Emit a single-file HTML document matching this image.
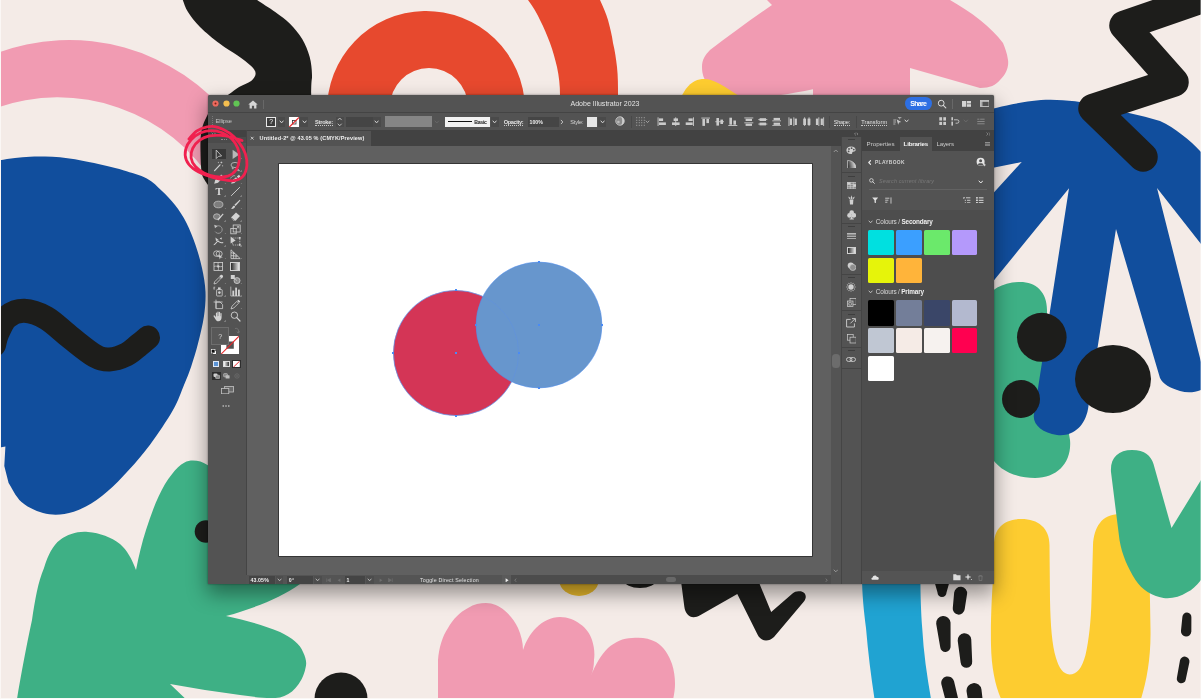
<!DOCTYPE html>
<html><head><meta charset="utf-8"><title>Adobe Illustrator 2023</title>
<style>
*{box-sizing:border-box;margin:0;padding:0}
html,body{width:1201px;height:699px;overflow:hidden;background:#f4ebe7;font-family:"Liberation Sans",sans-serif}
#bg{position:absolute;left:0;top:0;width:1201px;height:699px}
#shadow{position:absolute;left:208px;top:95px;width:785.7px;height:488.8px;border-radius:2px 2px 0 0;box-shadow:0 9px 20px 1px rgba(0,0,0,.4),0 0 2px rgba(0,0,0,.5)}
#win{position:absolute;left:208px;top:95px;width:785.7px;height:488.8px;background:#535353;border-radius:2px 2px 0 0;overflow:hidden}
#w{will-change:transform;position:absolute;left:-208px;top:-95px;width:1201px;height:699px}
.a{position:absolute;display:block}
.t{white-space:nowrap}
#over{position:absolute;left:0;top:0;width:1201px;height:699px;pointer-events:none}
</style></head><body>
<svg id="bg" width="1201" height="699" viewBox="0 0 1201 699">
<rect width="1201" height="699" fill="#f4ebe7"/>
<!-- blue blob left -->
<path d="M-8.0,162.0 C-6.7,161.7 -3.8,161.0 0.0,160.3 C3.8,159.6 10.0,158.6 15.0,158.0 C20.0,157.4 25.0,156.9 30.0,156.7 C35.0,156.5 40.0,156.5 45.0,156.6 C50.0,156.7 55.0,156.9 60.0,157.3 C65.0,157.8 70.0,158.5 75.0,159.3 C80.0,160.1 84.7,161.2 90.0,162.3 C95.3,163.4 101.3,164.6 107.0,166.0 C112.7,167.4 117.4,168.4 124.0,170.5 C130.6,172.6 140.5,175.1 146.8,178.5 C153.1,181.9 157.3,186.6 162.0,191.0 C166.7,195.4 170.9,199.7 175.0,205.0 C179.1,210.3 183.1,216.3 186.5,223.0 C189.9,229.7 192.9,237.5 195.5,245.0 C198.1,252.5 200.3,260.2 202.0,268.0 C203.7,275.8 205.2,284.0 205.5,292.0 C205.8,300.0 205.2,307.4 204.0,316.0 C202.8,324.6 200.1,335.2 198.0,343.6 C195.9,352.0 193.5,359.6 191.2,366.5 C188.9,373.4 187.0,377.8 184.0,385.0 C181.0,392.2 178.6,400.1 173.0,410.0 C167.4,419.9 157.6,434.4 150.2,444.4 C142.8,454.4 136.0,462.1 128.8,470.0 C121.7,477.9 114.5,485.5 107.3,491.6 C100.1,497.7 93.1,502.9 85.9,506.6 C78.8,510.3 71.6,512.9 64.4,514.0 C57.3,515.1 50.1,515.0 43.0,513.0 C35.9,511.0 27.2,507.0 21.5,502.0 C15.8,497.0 10.8,486.2 8.6,483.0 L4.3,466 L5.4,446.5 L-8,449 Z" fill="#114e9d"/>
<!-- black squiggle on blue -->
<path d="M-6.0,345.0 C-5.4,342.9 -4.6,337.3 -2.4,332.6 C-0.2,327.9 2.8,320.4 7.3,316.8 C11.8,313.2 17.8,310.6 24.3,310.8 C30.8,311.0 38.5,313.6 46.2,318.0 C53.9,322.4 62.4,331.2 70.5,337.5 C78.6,343.8 88.3,352.1 94.8,355.7 C101.3,359.3 104.1,359.6 109.4,359.4 C114.7,359.2 121.5,356.9 126.4,354.5 C131.3,352.1 135.4,347.8 139.0,345.0 C142.6,342.2 146.5,338.8 148.0,337.5" fill="none" stroke="#1d1d1b" stroke-width="24" stroke-linecap="round" stroke-linejoin="round"/>
<!-- pink arc -->
<path d="M-5,53.85 A205.8,205.8 0 0 1 232,119.9 L215,185.2 A184.4,184.4 0 0 0 -5,108.4 Z" fill="#f19bb2"/>
<!-- black blob top-left -->
<path d="M181.0,-6.0 C181.3,-5.0 181.6,-3.0 182.8,0.0 C184.0,3.0 185.1,7.5 188.0,12.0 C190.9,16.5 194.7,21.7 200.0,27.0 C205.3,32.3 213.3,38.8 219.6,43.6 C225.9,48.4 232.3,51.9 237.6,55.6 C242.8,59.4 248.1,63.1 251.1,66.1 C254.1,69.1 255.6,71.1 255.6,73.6 C255.6,76.1 253.8,78.8 251.1,81.1 C248.3,83.3 242.8,84.8 239.1,87.1 C235.3,89.3 232.8,91.8 228.6,94.6 C224.4,97.4 217.4,100.8 214.0,104.0 C210.6,107.2 209.8,110.5 208.0,114.0 C206.2,117.5 204.2,121.2 203.0,125.0 C201.8,128.8 201.1,132.5 200.7,137.0 C200.3,141.5 200.4,147.2 200.5,152.0 C200.6,156.8 200.7,162.0 201.0,166.0 C201.3,170.0 201.3,172.8 202.5,176.0 C203.7,179.2 207.1,183.5 208.0,185.0 L311,190 L311.0,190.0 C311.0,174.1 311.0,113.8 311.2,94.6 C311.4,75.4 312.2,81.3 312.0,75.0 C311.8,68.7 311.3,63.0 309.7,57.0 C308.1,51.0 305.4,44.5 302.2,39.0 C298.9,33.5 294.7,28.5 290.2,24.0 C285.7,19.5 280.7,16.0 275.2,12.0 C269.7,8.0 261.3,3.0 257.1,0.0 C252.9,-3.0 251.2,-5.0 250.0,-6.0 Z" fill="#1d1d1b"/>
<!-- orange ring -->
<path d="M327,112 A99,99 0 1 1 525,108 A99,99 0 1 1 327,108 Z M390,107 A39,39 0 1 0 468,107 A39,39 0 1 0 390,107 Z" fill="#e7492e" fill-rule="evenodd"/>
<path d="M528,0 C533,7 537,13 540,20 C544,28 547,35 550,43 C553,51 555,59 557,67 C559,76 560,86 560,95 L560,130 L618,130 L618,95 C618,86 618,76 617,67 C616,59 615,51 613,43 C612,35 610,28 608,20 C606,13 603,7 600,0 Z" fill="#e7492e"/>
<!-- pink flower top right -->
<path d="M767,0 L772,5 C750,20 730,35 710,50 C705,55 702,60 702,67 C702,74 704,79 707,83 C712,89 719,93 727,95 L777,95.5 C790,94 802,91.5 813,89.3 L813,130 L910,130 L910,68 L980,88 C990,88 996,85 1000,80 C1006,74 1009,67 1008,60 C1007,53 1005,48 1003,43 C997,35 989,27 980,20 C970,12 960,6 950,0 Z" fill="#f19bb2"/>
<!-- yellow blob top -->
<path d="M680,100 C683,92 688,84.5 695,81 C698,79.6 701,79 704,79 C709,79 714,80.8 719,83.5 C726,87.5 733,92 742,98 L742,110 L680,110 Z" fill="#fdcc30"/>
<!-- green bar right -->
<path d="M985,300 C990,290 1003,282 1020,282 C1036,282 1047,292 1047,310 L1047,330 C1055,370 1066,410 1070,440 C1072,462 1058,478 1035,478 C1015,478 998,470 990,455 Z" fill="#3eb085"/>
<!-- blue fan -->
<path d="M980,112 C995,108 1012,103 1041,100 C1060,99 1080,101 1100,106 C1120,111 1140,115 1160,121 C1175,128 1190,140 1201,152 L1201,244 L1157,188 L1201,362 L1210,385 C1200,392 1190,394 1180,391 C1170,388 1163,384 1160,378 L1116,229 L1088,409 C1085,426 1073,437 1057,435 C1042,433 1032,424 1034,414 L1069,188.3 L993.2,281.3 L980,297.5 L980,205 L993.2,193.3 L1021.7,162 L993.2,167.8 L980,170.5 Z" fill="#114e9d"/>
<!-- black dots right -->
<ellipse cx="1041.8" cy="337.3" rx="24.8" ry="24.5" fill="#1d1d1b"/>
<ellipse cx="1113" cy="379" rx="38" ry="34" fill="#1d1d1b"/>
<ellipse cx="1021" cy="399" rx="19" ry="19" fill="#1d1d1b"/>
<!-- black zigzag top right -->
<path d="M1215,-6 L1124,25.5 L1174,82 L1093,108.5 L1143,157" fill="none" stroke="#1d1d1b" stroke-width="29.5" stroke-linecap="round" stroke-linejoin="round"/>
<!-- yellow U -->
<path d="M994,545 C994,528 1004,519 1021.5,519 C1038,519 1049.5,528 1049.5,545 L1050,600 C1050.5,625 1052,645 1056,658 C1059,668 1063,674 1069.5,674.5 C1077,674.5 1082,668 1085.5,655 C1089,640 1091,620 1091.5,600 L1093,545 C1094,528 1101,514 1120,514 C1140,514 1149,528 1149,545 L1150.5,630 C1151,660 1146,685 1139,705 L1004,705 C996,690 991.5,670 991,645 C990.5,620 992,590 994,565 Z" fill="#fdcc30"/>
<!-- green V -->
<path d="M1111,472 C1110,458 1118,450 1132,450 C1145,450 1151,456 1153.5,464 L1171.5,528 L1201,480 L1215,480 L1215,565 L1201,580 C1196,586 1192,590 1187.5,592 C1180,597 1171,599 1163.5,598 C1152,596 1142,590 1135.5,580 C1128,568 1122,555 1119.5,540 Z" fill="#3eb085"/>
<!-- light blue arc -->
<path d="M862,575 C862,595 864,612 866,628 C868,652 871,676 874.5,699 L931,699 C927,676 923.5,652 922.2,628 C921,612 920.4,595 920.4,575 Z" fill="#20a3d2"/>
<!-- dashes -->
<g fill="#1d1d1b">
<path d="M-7.8,-4.2 A7.8,7.8 0 0 1 7.8,-4.2 L4.5,7.5 A4.5,4.5 0 0 1 -4.5,7.5 Z" transform="translate(942,585) rotate(0)"/>
<path d="M-6.5,-7.5 A6.5,6.5 0 0 1 6.5,-7.5 L6.0,8.0 A6.0,6.0 0 0 1 -6.0,8.0 Z" transform="translate(959.7,600.7) rotate(7)"/>
<path d="M-7.2,-10.8 A7.2,7.2 0 0 1 7.2,-10.8 L5.2,12.8 A5.2,5.2 0 0 1 -5.2,12.8 Z" transform="translate(944.3,634) rotate(-5)"/>
<path d="M-6.8,-10.5 A6.8,6.8 0 0 1 6.8,-10.5 L5.8,11.5 A5.8,5.8 0 0 1 -5.8,11.5 Z" transform="translate(965.4,650.5) rotate(-5)"/>
<path d="M-6.5,-13.5 A6.5,6.5 0 0 1 6.5,-13.5 L6.2,13.8 A6.2,6.2 0 0 1 -6.2,13.8 Z" transform="translate(951,696) rotate(-14)"/>
<path d="M-7.5,-10.5 A7.5,7.5 0 0 1 7.5,-10.5 L7.0,11.0 A7.0,7.0 0 0 1 -7.0,11.0 Z" transform="translate(975.5,701) rotate(-8)"/>
<path d="M-4.5,-7.5 A4.5,4.5 0 0 1 4.5,-7.5 L5.2,6.8 A5.2,5.2 0 0 1 -5.2,6.8 Z" transform="translate(1186.5,624.5) rotate(3)"/>
<path d="M-4.8,-8.8 A4.8,4.8 0 0 1 4.8,-8.8 L4.5,9.0 A4.5,4.5 0 0 1 -4.5,9.0 Z" transform="translate(1183,670) rotate(11)"/>
</g>
<!-- black zigzag bottom -->
<path d="M681,570 L681.3,583.3 L684.3,606.5 C685.5,616 692,620 700.5,615 L737.3,594 L757.5,634.5 C761,641.5 768,642.5 774,637 L803.5,602 C808.5,596 804.5,590.5 798.5,591.3 C796,591.5 794.5,592 792.5,593.5 L771.2,612 L759.3,583.3 L759,570 Z" fill="#1d1d1b"/>
<ellipse cx="640" cy="580" rx="16" ry="8" fill="#1d1d1b"/>
<!-- yellow blob bottom -->
<ellipse cx="579" cy="581" rx="19.5" ry="15" fill="#e8b92c"/>
<!-- pink cloud -->
<path d="M438,705 L438,660 C439,648 442,637 448,628 C453,619 460,612 468,608 C474,604 480,603 486,603 C493,603 499,606 504,610 C510,615 515,621 518,628 C521,635 523,642 523,650 C526,641 530,634 536,628 C543,621 551,617 560,617 C568,617 575,620 580,624 C586,628 590,634 592,640 C594,646 595,653 594,660 C594,666 593,671 591,676 C595,665 601,655 608,648 C615,642 623,638 632,638 C641,637 649,638 656,642 C664,647 669,655 672,664 C674,670 675,677 675,684 C675,690 674,695 672,705 Z" fill="#f19bb2"/>
<!-- green leaf -->
<path d="M16,705 C20,680 26,648 32,620 C35,600 38,582 44,568 C48,555 53,545 60,540 C68,534 78,531 88,532 C100,533 111,537 120,544 C127,550 132,559 136,570 C139,555 142,542 146,530 C150,518 154,506 158.8,496 C163,487 167,480 171.7,474.4 C176,469 180,465 184.6,462.6 C187,461 190,460.5 193,460.5 C198,460.5 203,462 207,464.8 C213,468 219,471 225,475 L300,475 L300,584 C280,598 255,608 226,616 C245,620 263,625 280,632 C292,638 300,644 303,652 C306,658 307,663 305.5,668 C304,676 300,683 295.5,688 C291,693 286,696 280,697.5 C268,699 254,697 240,695 C217,692 193,688 170,684 L192,705 Z" fill="#3eb085"/>
<!-- black dots left -->
<circle cx="206" cy="531.5" r="11.3" fill="#1d1d1b"/>
<circle cx="341" cy="699" r="26.5" fill="#1d1d1b"/>
<!-- border strips -->
<rect x="0" y="0" width="1" height="699" fill="#fbf7f5"/>
<rect x="1200" y="0" width="1" height="699" fill="#fff" opacity=".35"/>
<rect x="0" y="698" width="1201" height="1" fill="#fbf8f6"/>
</svg>
<div id="shadow"></div>
<div id="win"><div id="w">
<div class="a" style="left:208px;top:95px;width:786px;height:489px;background:#535353;"></div>
<div class="a" style="left:208px;top:111.6px;width:786px;height:0.9px;background:#444;"></div>
<div class="a" style="left:246px;top:145.7px;width:595px;height:431px;background:#606060;"></div>
<div class="a" style="left:246px;top:130.2px;width:595px;height:15.5px;background:#424242;"></div>
<div class="a" style="left:246.9px;top:131.2px;width:124.3px;height:14.5px;background:#535353;"></div>
<div class="a" style="left:208px;top:130.2px;width:38px;height:6.8px;background:#424242;"></div>
<div class="a" style="left:208px;top:137px;width:38px;height:5.5px;background:#4b4b4b;"></div>
<div class="a" style="left:245.6px;top:130.2px;width:0.8px;height:454px;background:#454545;"></div>
<div class="a" style="left:279px;top:164px;width:533px;height:392.2px;background:#fff;box-shadow:0 0 0 0.8px #2b2b2b;"></div>
<div class="a" style="left:831px;top:145.5px;width:10px;height:431px;background:#545454;"></div>
<div class="a" style="left:832.2px;top:353.8px;width:7.6px;height:13.8px;background:#6c6c6c;border-radius:3.5px;"></div>
<div class="a" style="left:246.4px;top:574.9px;width:595px;height:9.1px;background:#545454;"></div>
<div class="a" style="left:511px;top:574.9px;width:320px;height:9.1px;background:#4c4c4c;"></div>
<div class="a" style="left:501.6px;top:574.9px;width:9.4px;height:9.1px;background:#5a5a5a;"></div>
<div class="a" style="left:841px;top:130.2px;width:20.7px;height:454px;background:#535353;"></div>
<div class="a" style="left:840.6px;top:130.2px;width:0.8px;height:454px;background:#454545;"></div>
<div class="a" style="left:861.3px;top:130.2px;width:0.8px;height:454px;background:#444;"></div>
<div class="a" style="left:841px;top:130.2px;width:153px;height:6.8px;background:#424242;"></div>
<div class="a" style="left:862px;top:137px;width:132px;height:447px;background:#4d4d4d;"></div>
<div class="a" style="left:862px;top:137px;width:132px;height:13.8px;background:#424242;"></div>
<div class="a" style="left:862px;top:150.8px;width:132px;height:59.4px;background:#535353;"></div>
<div class="a" style="left:862px;top:570.8px;width:132px;height:13px;background:#545454;"></div>
<svg class="a" style="left:212.4px;top:100.3px;" width="7" height="7" viewBox="0 0 7 7"><circle cx="3.5" cy="3.5" r="3.1" fill="#ec6a5e"/><circle cx="3.5" cy="3.5" r="1" fill="#7a1d14"/></svg>
<svg class="a" style="left:222.8px;top:100.3px;" width="7" height="7" viewBox="0 0 7 7"><circle cx="3.5" cy="3.5" r="3.1" fill="#f5bf4f"/></svg>
<svg class="a" style="left:233.2px;top:100.3px;" width="7" height="7" viewBox="0 0 7 7"><circle cx="3.5" cy="3.5" r="3.1" fill="#61c554"/></svg>
<svg class="a" style="left:247.5px;top:99.5px;" width="10" height="9" viewBox="0 0 10 9"><path d="M5,0.4 L9.7,4.6 L8.4,4.6 L8.4,8.6 L6.1,8.6 L6.1,5.8 L3.9,5.8 L3.9,8.6 L1.6,8.6 L1.6,4.6 L0.3,4.6 Z" fill="#d6d6d6"/></svg>
<div class="a" style="left:263.2px;top:99.8px;width:0.7px;height:9.2px;background:#686868;"></div>
<span class="a t" style="left:570.5px;top:98.95px;line-height:9.1px;font-size:7px;font-weight:400;color:#e4e4e4;letter-spacing:0.024px;">Adobe Illustrator 2023</span>
<div class="a" style="left:905.1px;top:97.3px;width:27.4px;height:12.8px;background:#2d6fe3;border-radius:6.4px;"></div>
<span class="a t" style="left:910.2px;top:99.35px;line-height:9.1px;font-size:7px;font-weight:700;color:#fff;letter-spacing:-0.667px;">Share</span>
<svg class="a" style="left:937.4px;top:98.5px;" width="10" height="10" viewBox="0 0 10 10"><circle cx="4.2" cy="4.2" r="2.9" fill="none" stroke="#d8d8d8" stroke-width="1"/><path d="M6.3,6.3 L8.8,8.8" stroke="#d8d8d8" stroke-width="1.1" stroke-linecap="round"/></svg>
<div class="a" style="left:952.3px;top:99px;width:0.7px;height:9.5px;background:#686868;"></div>
<svg class="a" style="left:961.7px;top:100.9px;" width="9.4" height="5.8" viewBox="0 0 9.4 5.8"><rect x="0" y="0" width="4.3" height="5.8" fill="#d4d4d4"/><rect x="5" y="0" width="4.4" height="2.5" fill="#d4d4d4"/><rect x="5" y="3.2" width="4.4" height="2.6" fill="#d4d4d4"/></svg>
<svg class="a" style="left:979.6px;top:100.1px;" width="9.6" height="7" viewBox="0 0 9.6 7"><rect x="0.5" y="0.5" width="8.6" height="6" fill="none" stroke="#c4c4c4" stroke-width="0.9"/><rect x="0.5" y="0.5" width="8.6" height="1.3" fill="#c4c4c4"/><rect x="0.5" y="0.5" width="2" height="6" fill="#c4c4c4" opacity=".8"/></svg>
<div class="a" style="left:211.6px;top:116px;width:0;height:11px;border-left:0.8px dotted #777"></div>
<span class="a t" style="left:215.6px;top:118.3px;line-height:7.41px;font-size:5.7px;font-weight:400;color:#c6c6c6;letter-spacing:-0.078px;">Ellipse</span>
<div class="a" style="left:266px;top:116.6px;width:10.3px;height:10.4px;background:#3c3c3c;border:0.9px solid #e8e8e8;"></div>
<span class="a t" style="left:269.31px;top:117.78px;line-height:8.84px;font-size:6.8px;font-weight:400;color:#fff;">?</span>
<div class="a" style="left:277.6px;top:116.6px;width:7.6px;height:10.4px;background:#4a4a4a;"></div>
<svg class="a" style="left:278.6px;top:120.05px;" width="5.2" height="3.9" viewBox="0 0 5.2 3.9"><path d="M1,1 L2.6,2.9 L4.2,1" fill="none" stroke="#d4d4d4" stroke-width="1" stroke-linecap="round" stroke-linejoin="round"/></svg>
<svg class="a" style="left:289px;top:116.6px;" width="10.4" height="10.4" viewBox="0 0 10.4 10.4"><rect width="10.4" height="10.4" fill="#fff"/><rect x="3.4" y="3.4" width="3.6" height="3.6" fill="none" stroke="#333" stroke-width="0.8"/><path d="M0.3,10.1 L10.1,0.3" stroke="#e8262a" stroke-width="1.1"/></svg>
<div class="a" style="left:300.4px;top:116.6px;width:7.6px;height:10.4px;background:#4a4a4a;"></div>
<svg class="a" style="left:301.5px;top:120.05px;" width="5.2" height="3.9" viewBox="0 0 5.2 3.9"><path d="M1,1 L2.6,2.9 L4.2,1" fill="none" stroke="#d4d4d4" stroke-width="1" stroke-linecap="round" stroke-linejoin="round"/></svg>
<span class="a t" style="left:315px;top:118.66px;line-height:7.28px;font-size:5.6px;font-weight:700;color:#e2e2e2;letter-spacing:-0.214px;border-bottom:0.7px dotted #c8c8c8;line-height:6px;">Stroke:</span>
<div class="a" style="left:336px;top:116.6px;width:7.8px;height:10.4px;background:#4a4a4a;"></div>
<svg class="a" style="left:337.2px;top:117.3px;" width="5.4" height="3.8" viewBox="0 0 5.4 3.8"><path d="M1,2.8 L2.7,1 L4.4,2.8" fill="none" stroke="#ccc" stroke-width="0.9" stroke-linecap="round" stroke-linejoin="round"/></svg>
<svg class="a" style="left:337.2px;top:122.9px;" width="5.4" height="3.8" viewBox="0 0 5.4 3.8"><path d="M1,1 L2.7,2.8 L4.4,1" fill="none" stroke="#ccc" stroke-width="0.9" stroke-linecap="round" stroke-linejoin="round"/></svg>
<div class="a" style="left:346px;top:116.9px;width:26.6px;height:9.8px;background:#454545;"></div>
<div class="a" style="left:373px;top:116.6px;width:7.6px;height:10.4px;background:#4a4a4a;"></div>
<svg class="a" style="left:374.2px;top:120.05px;" width="5.2" height="3.9" viewBox="0 0 5.2 3.9"><path d="M1,1 L2.6,2.9 L4.2,1" fill="none" stroke="#d4d4d4" stroke-width="1" stroke-linecap="round" stroke-linejoin="round"/></svg>
<div class="a" style="left:384.5px;top:116.2px;width:47.6px;height:11px;background:#858585;"></div>
<svg class="a" style="left:434.2px;top:120px;" width="5.6" height="4" viewBox="0 0 5.6 4"><path d="M1,1 L2.8,3 L4.6,1" fill="none" stroke="#6a6a6a" stroke-width="0.9" stroke-linecap="round" stroke-linejoin="round"/></svg>
<div class="a" style="left:444.6px;top:116.5px;width:45.6px;height:10.6px;background:#f2f2f2;"></div>
<div class="a" style="left:447.6px;top:121.2px;width:24.2px;height:1.1px;background:#111;"></div>
<span class="a t" style="left:474.2px;top:119.02px;line-height:6.76px;font-size:5.2px;font-weight:700;color:#222;letter-spacing:-0.261px;">Basic</span>
<div class="a" style="left:491.2px;top:116.6px;width:7.6px;height:10.4px;background:#4a4a4a;"></div>
<svg class="a" style="left:492.4px;top:120.05px;" width="5.2" height="3.9" viewBox="0 0 5.2 3.9"><path d="M1,1 L2.6,2.9 L4.2,1" fill="none" stroke="#d4d4d4" stroke-width="1" stroke-linecap="round" stroke-linejoin="round"/></svg>
<span class="a t" style="left:503.7px;top:118.66px;line-height:7.28px;font-size:5.6px;font-weight:700;color:#e2e2e2;letter-spacing:-0.342px;border-bottom:0.7px dotted #c8c8c8;line-height:6px;">Opacity:</span>
<div class="a" style="left:528px;top:116.9px;width:30.8px;height:9.8px;background:#454545;"></div>
<span class="a t" style="left:529.4px;top:119.02px;line-height:6.76px;font-size:5.2px;font-weight:700;color:#eee;letter-spacing:0.106px;">100%</span>
<svg class="a" style="left:560.3px;top:118.9px;" width="4" height="6" viewBox="0 0 4 6"><path d="M1.2,1.2 L2.8,3 L1.2,4.8" fill="none" stroke="#ccc" stroke-width="0.9" stroke-linecap="round" stroke-linejoin="round"/></svg>
<span class="a t" style="left:570.2px;top:118.66px;line-height:7.28px;font-size:5.6px;font-weight:400;color:#d6d6d6;letter-spacing:-0.120px;">Style:</span>
<div class="a" style="left:587px;top:116.5px;width:10px;height:10.2px;background:#e6e6e6;"></div>
<div class="a" style="left:598.4px;top:116.6px;width:7.6px;height:10.4px;background:#4a4a4a;"></div>
<svg class="a" style="left:599.6px;top:120.05px;" width="5.2" height="3.9" viewBox="0 0 5.2 3.9"><path d="M1,1 L2.6,2.9 L4.2,1" fill="none" stroke="#d4d4d4" stroke-width="1" stroke-linecap="round" stroke-linejoin="round"/></svg>
<svg class="a" style="left:615px;top:116.4px;" width="10" height="10" viewBox="0 0 10 10"><circle cx="5" cy="5" r="4.3" fill="#8d8d8d" stroke="#c9c9c9" stroke-width="0.8"/><path d="M5,0.8 A4.2,4.2 0 0 1 5,9.2 A2.2,4.2 0 0 0 5,0.8Z" fill="#cfcfcf"/><circle cx="3.4" cy="6" r="1.3" fill="#bdbdbd"/></svg>
<div class="a" style="left:631px;top:115.5px;width:0.7px;height:12.5px;background:#484848;"></div>
<svg class="a" style="left:635.9px;top:116.9px;" width="9" height="9" viewBox="0 0 9 9"><rect x="0.3" y="0.3" width="0.9" height="0.9" fill="#bdbdbd"/><rect x="0.3" y="2.8" width="0.9" height="0.9" fill="#bdbdbd"/><rect x="0.3" y="5.3" width="0.9" height="0.9" fill="#bdbdbd"/><rect x="0.3" y="7.8" width="0.9" height="0.9" fill="#bdbdbd"/><rect x="2.8" y="0.3" width="0.9" height="0.9" fill="#bdbdbd"/><rect x="2.8" y="2.8" width="0.9" height="0.9" fill="#bdbdbd"/><rect x="2.8" y="5.3" width="0.9" height="0.9" fill="#bdbdbd"/><rect x="2.8" y="7.8" width="0.9" height="0.9" fill="#bdbdbd"/><rect x="5.3" y="0.3" width="0.9" height="0.9" fill="#bdbdbd"/><rect x="5.3" y="2.8" width="0.9" height="0.9" fill="#bdbdbd"/><rect x="5.3" y="5.3" width="0.9" height="0.9" fill="#bdbdbd"/><rect x="5.3" y="7.8" width="0.9" height="0.9" fill="#bdbdbd"/><rect x="7.8" y="0.3" width="0.9" height="0.9" fill="#bdbdbd"/><rect x="7.8" y="2.8" width="0.9" height="0.9" fill="#bdbdbd"/><rect x="7.8" y="5.3" width="0.9" height="0.9" fill="#bdbdbd"/><rect x="7.8" y="7.8" width="0.9" height="0.9" fill="#bdbdbd"/></svg>
<svg class="a" style="left:645.1px;top:120.2px;" width="5" height="3.6" viewBox="0 0 5 3.6"><path d="M1,1 L2.5,2.6 L4,1" fill="none" stroke="#aaa" stroke-width="0.9" stroke-linecap="round" stroke-linejoin="round"/></svg>
<svg class="a" style="left:656.8px;top:116.6px;" width="9.6" height="9.6" viewBox="0 0 9.6 9.6"><rect x="0.6" y="0.3" width="0.9" height="9" fill="#cacaca"/><rect x="1.9" y="1.4" width="4.2" height="2.6" fill="#cacaca"/><rect x="1.9" y="5.4" width="7" height="2.6" fill="#cacaca"/></svg>
<svg class="a" style="left:670.6px;top:116.6px;" width="9.6" height="9.6" viewBox="0 0 9.6 9.6"><rect x="4.3" y="0.3" width="0.9" height="9" fill="#cacaca"/><rect x="2.6" y="1.4" width="4.4" height="2.6" fill="#cacaca"/><rect x="1" y="5.4" width="7.6" height="2.6" fill="#cacaca"/></svg>
<svg class="a" style="left:684.6px;top:116.6px;" width="9.6" height="9.6" viewBox="0 0 9.6 9.6"><rect x="8.1" y="0.3" width="0.9" height="9" fill="#cacaca"/><rect x="3.5" y="1.4" width="4.2" height="2.6" fill="#cacaca"/><rect x="0.7" y="5.4" width="7" height="2.6" fill="#cacaca"/></svg>
<svg class="a" style="left:700.6px;top:116.6px;" width="9.6" height="9.6" viewBox="0 0 9.6 9.6"><rect x="0.3" y="0.6" width="9" height="0.9" fill="#cacaca"/><rect x="1.4" y="1.9" width="2.6" height="7" fill="#cacaca"/><rect x="5.4" y="1.9" width="2.6" height="4.2" fill="#cacaca"/></svg>
<svg class="a" style="left:714.6px;top:116.6px;" width="9.6" height="9.6" viewBox="0 0 9.6 9.6"><rect x="0.3" y="4.3" width="9" height="0.9" fill="#cacaca"/><rect x="1.4" y="1" width="2.6" height="7.6" fill="#cacaca"/><rect x="5.4" y="2.6" width="2.6" height="4.4" fill="#cacaca"/></svg>
<svg class="a" style="left:728.2px;top:116.6px;" width="9.6" height="9.6" viewBox="0 0 9.6 9.6"><rect x="0.3" y="8.1" width="9" height="0.9" fill="#cacaca"/><rect x="1.4" y="0.7" width="2.6" height="7" fill="#cacaca"/><rect x="5.4" y="3.5" width="2.6" height="4.2" fill="#cacaca"/></svg>
<svg class="a" style="left:744.2px;top:116.6px;" width="9.6" height="9.6" viewBox="0 0 9.6 9.6"><rect x="0.3" y="0.5" width="9" height="0.9" fill="#cacaca"/><rect x="1.6" y="1.8" width="6.4" height="2.2" fill="#cacaca"/><rect x="0.3" y="5.4" width="9" height="0.9" fill="#cacaca"/><rect x="1.6" y="6.7" width="6.4" height="2.2" fill="#cacaca"/></svg>
<svg class="a" style="left:758.2px;top:116.6px;" width="9.6" height="9.6" viewBox="0 0 9.6 9.6"><rect x="0.3" y="2.2" width="9" height="0.9" fill="#cacaca"/><rect x="1.6" y="1.2" width="6.4" height="2.8" fill="#cacaca"/><rect x="0.3" y="6.6" width="9" height="0.9" fill="#cacaca"/><rect x="1.6" y="5.6" width="6.4" height="2.8" fill="#cacaca"/></svg>
<svg class="a" style="left:771.8px;top:116.6px;" width="9.6" height="9.6" viewBox="0 0 9.6 9.6"><rect x="0.3" y="3.4" width="9" height="0.9" fill="#cacaca"/><rect x="1.6" y="0.9" width="6.4" height="2.2" fill="#cacaca"/><rect x="0.3" y="8.2" width="9" height="0.9" fill="#cacaca"/><rect x="1.6" y="5.7" width="6.4" height="2.2" fill="#cacaca"/></svg>
<svg class="a" style="left:787.6px;top:116.6px;" width="9.6" height="9.6" viewBox="0 0 9.6 9.6"><rect x="0.5" y="0.3" width="0.9" height="9" fill="#cacaca"/><rect x="1.8" y="1.6" width="2.2" height="6.4" fill="#cacaca"/><rect x="5.4" y="0.3" width="0.9" height="9" fill="#cacaca"/><rect x="6.7" y="1.6" width="2.2" height="6.4" fill="#cacaca"/></svg>
<svg class="a" style="left:801.6px;top:116.6px;" width="9.6" height="9.6" viewBox="0 0 9.6 9.6"><rect x="2.2" y="0.3" width="0.9" height="9" fill="#cacaca"/><rect x="1.2" y="1.6" width="2.8" height="6.4" fill="#cacaca"/><rect x="6.6" y="0.3" width="0.9" height="9" fill="#cacaca"/><rect x="5.6" y="1.6" width="2.8" height="6.4" fill="#cacaca"/></svg>
<svg class="a" style="left:815.2px;top:116.6px;" width="9.6" height="9.6" viewBox="0 0 9.6 9.6"><rect x="3.4" y="0.3" width="0.9" height="9" fill="#cacaca"/><rect x="0.9" y="1.6" width="2.2" height="6.4" fill="#cacaca"/><rect x="8.2" y="0.3" width="0.9" height="9" fill="#cacaca"/><rect x="5.7" y="1.6" width="2.2" height="6.4" fill="#cacaca"/></svg>
<div class="a" style="left:829px;top:115.5px;width:0.7px;height:12.5px;background:#484848;"></div>
<span class="a t" style="left:833.8px;top:118.56px;line-height:7.28px;font-size:5.6px;font-weight:400;color:#e2e2e2;letter-spacing:-0.307px;border-bottom:0.7px dotted #c8c8c8;line-height:6px;">Shape:</span>
<div class="a" style="left:856px;top:115.5px;width:0.7px;height:12.5px;background:#484848;"></div>
<span class="a t" style="left:861.2px;top:118.56px;line-height:7.28px;font-size:5.6px;font-weight:400;color:#e2e2e2;letter-spacing:0.077px;border-bottom:0.7px dotted #c8c8c8;line-height:6px;">Transform</span>
<svg class="a" style="left:892.7px;top:116.7px;" width="9" height="9" viewBox="0 0 9 9"><path d="M0.3,3 H3 M0.3,5 H3 M0.3,7 H2.4" stroke="#cacaca" stroke-width="0.8"/><path d="M3.6,2.2 L8.2,5 L6,5.5 L5.2,7.8 Z" fill="#cacaca"/><path d="M5,0.6 H8.4 M6.7,0.6 V2.4" stroke="#cacaca" stroke-width="0.7"/></svg>
<svg class="a" style="left:904.4px;top:119.45px;" width="5.2" height="3.9" viewBox="0 0 5.2 3.9"><path d="M1,1 L2.6,2.9 L4.2,1" fill="none" stroke="#d4d4d4" stroke-width="1" stroke-linecap="round" stroke-linejoin="round"/></svg>
<svg class="a" style="left:938.9px;top:116.9px;" width="7.4" height="8.6" viewBox="0 0 7.4 8.6"><rect x="0.3" y="0.2" width="2.8" height="3.4" fill="#cacaca"/><rect x="4.3" y="0.2" width="2.8" height="3.4" fill="#cacaca"/><rect x="0.3" y="4.9" width="2.8" height="3.4" fill="#cacaca"/><rect x="4.3" y="4.9" width="2.8" height="3.4" fill="#cacaca"/></svg>
<svg class="a" style="left:951.3px;top:116.7px;" width="9" height="9" viewBox="0 0 9 9"><rect x="0.4" y="0.2" width="1.6" height="3.2" fill="#cacaca"/><rect x="0.4" y="4.6" width="1.6" height="4" fill="#cacaca"/><path d="M3,2.8 H6.2 A1.7,1.7 0 0 1 6.2,6.2 H4.6" fill="none" stroke="#cacaca" stroke-width="0.9"/></svg>
<svg class="a" style="left:963.2px;top:119.4px;" width="5.6" height="4" viewBox="0 0 5.6 4"><path d="M1,1 L2.8,3 L4.6,1" fill="none" stroke="#6c6c6c" stroke-width="0.9" stroke-linecap="round" stroke-linejoin="round"/></svg>
<svg class="a" style="left:977.4px;top:117.8px;" width="8" height="7" viewBox="0 0 8 7"><path d="M0.3,1.2 H2.4 M0.3,3.5 H7.6 M0.3,5.8 H7.6 M3.2,1.2 H7.6" stroke="#8e8e8e" stroke-width="0.9"/></svg>
<svg class="a" style="left:250.3px;top:136.1px;" width="4.4" height="4.4" viewBox="0 0 4.4 4.4"><path d="M0.8,0.8 L3.6,3.6 M3.6,0.8 L0.8,3.6" stroke="#ddd" stroke-width="0.8"/></svg>
<span class="a t" style="left:259.6px;top:135.23px;line-height:7.15px;font-size:5.5px;font-weight:700;color:#f0f0f0;letter-spacing:0.140px;">Untitled-2* @ 43.05 % (CMYK/Preview)</span>
<svg class="a" style="left:210.75px;top:132px;" width="4.9" height="4" viewBox="0 0 4.9 4"><path d="M0.5,0.5 L2,2 L0.5,3.5 M2.9,0.5 L4.4,2 L2.9,3.5" fill="none" stroke="#a8a8a8" stroke-width="0.6"/></svg>
<div class="a" style="left:221px;top:139.2px;width:6px;height:0;border-top:0.8px dotted #8a8a8a"></div>
<svg class="a" style="left:853.55px;top:131.8px;" width="4.9" height="4" viewBox="0 0 4.9 4"><path d="M2,0.5 L0.5,2 L2,3.5 M4.4,0.5 L2.9,2 L4.4,3.5" fill="none" stroke="#a8a8a8" stroke-width="0.6"/></svg>
<svg class="a" style="left:985.55px;top:131.8px;" width="4.9" height="4" viewBox="0 0 4.9 4"><path d="M0.5,0.5 L2,2 L0.5,3.5 M2.9,0.5 L4.4,2 L2.9,3.5" fill="none" stroke="#a8a8a8" stroke-width="0.6"/></svg>
<div class="a" style="left:212.3px;top:148.5px;width:13.7px;height:10.7px;background:#383838;"></div>
<svg class="a" style="left:213.4px;top:148.6px;" width="11" height="11" viewBox="0 0 11 11"><path d="M3.2,1 L3.2,9.6 L5.4,7.4 L8.6,7 Z" fill="none" stroke="#d2d2d2" stroke-width="0.8" stroke-linejoin="round"/></svg>
<svg class="a" style="left:229.5px;top:148.6px;" width="11" height="11" viewBox="0 0 11 11"><path d="M2.6,0.8 L2.6,10 L9.4,5.6 Z" fill="#b8b8b8"/></svg>
<svg class="a" style="left:240.15px;top:157.55px;" width="1.7" height="1.7" viewBox="0 0 1.7 1.7"><path d="M1.7,0 V1.7 H0 Z" fill="#a4a4a4"/></svg>
<svg class="a" style="left:213.4px;top:161.1px;" width="11" height="11" viewBox="0 0 11 11"><path d="M1.6,9.6 L7,3.8" stroke="#d2d2d2" stroke-width="1.2" stroke-linecap="round"/><path d="M8.4,0.6 V2.4 M7.5,1.5 H9.3 M9.6,4.2 V5.4 M5.4,0.9 V2.1" stroke="#d2d2d2" stroke-width="0.7"/></svg>
<svg class="a" style="left:229.5px;top:161.1px;" width="11" height="11" viewBox="0 0 11 11"><ellipse cx="5" cy="4" rx="4" ry="2.6" fill="none" stroke="#b5b5b5" stroke-width="0.9"/><path d="M2.4,6 C1.6,7.4 2.6,8.6 3.6,7.6 M6.4,6.4 L9.6,9.8 L7.6,9.6 Z" fill="#b5b5b5" stroke="#b5b5b5" stroke-width="0.7"/></svg>
<svg class="a" style="left:240.15px;top:170.05px;" width="1.7" height="1.7" viewBox="0 0 1.7 1.7"><path d="M1.7,0 V1.7 H0 Z" fill="#a4a4a4"/></svg>
<svg class="a" style="left:213.4px;top:173.6px;" width="11" height="11" viewBox="0 0 11 11"><path d="M1.2,9.8 L2.2,6 L6.6,2 L9,4.4 L5,8.8 Z" fill="#d2d2d2"/><path d="M7.2,1.4 L8.2,0.6 L10.4,2.8 L9.6,3.8 Z" fill="#d2d2d2"/></svg>
<svg class="a" style="left:224.05px;top:182.55px;" width="1.7" height="1.7" viewBox="0 0 1.7 1.7"><path d="M1.7,0 V1.7 H0 Z" fill="#a4a4a4"/></svg>
<svg class="a" style="left:229.5px;top:173.6px;" width="11" height="11" viewBox="0 0 11 11"><path d="M1.2,9.8 L2.2,6.6 L6,3.2 L8,5.2 L4.4,9 Z" fill="#d2d2d2"/><path d="M6.8,2.4 L9,0.8 L10.4,2.4 L8.6,4.4 Z" fill="#d2d2d2"/><path d="M0.6,4.4 C2,1.6 4.4,1.4 5.2,2" fill="none" stroke="#d2d2d2" stroke-width="0.7"/></svg>
<svg class="a" style="left:240.15px;top:182.55px;" width="1.7" height="1.7" viewBox="0 0 1.7 1.7"><path d="M1.7,0 V1.7 H0 Z" fill="#a4a4a4"/></svg>
<span class="a t" style="left:215.39px;top:184.68px;line-height:13.65px;font-size:10.5px;font-weight:700;color:#dcdcdc;font-family:'Liberation Serif',serif;">T</span>
<svg class="a" style="left:224.05px;top:195.05px;" width="1.7" height="1.7" viewBox="0 0 1.7 1.7"><path d="M1.7,0 V1.7 H0 Z" fill="#a4a4a4"/></svg>
<svg class="a" style="left:229.5px;top:186.1px;" width="11" height="11" viewBox="0 0 11 11"><path d="M1.4,9.6 L9.6,1.4" stroke="#d2d2d2" stroke-width="0.9" stroke-linecap="round"/></svg>
<svg class="a" style="left:240.15px;top:195.05px;" width="1.7" height="1.7" viewBox="0 0 1.7 1.7"><path d="M1.7,0 V1.7 H0 Z" fill="#a4a4a4"/></svg>
<svg class="a" style="left:213.4px;top:198.6px;" width="11" height="11" viewBox="0 0 11 11"><ellipse cx="5.4" cy="5.5" rx="4.5" ry="3.3" fill="#7d7d7d" stroke="#c2c2c2" stroke-width="0.8"/></svg>
<svg class="a" style="left:224.05px;top:207.55px;" width="1.7" height="1.7" viewBox="0 0 1.7 1.7"><path d="M1.7,0 V1.7 H0 Z" fill="#a4a4a4"/></svg>
<svg class="a" style="left:229.5px;top:198.6px;" width="11" height="11" viewBox="0 0 11 11"><path d="M9.8,0.8 L10.4,1.4 L5.6,7 L4.4,5.8 Z" fill="#d2d2d2"/><path d="M4,6.4 L5.2,7.6 C4.8,9.4 2.8,10.2 1,9.8 C2.4,9 2.2,7 4,6.4Z" fill="#d2d2d2"/></svg>
<svg class="a" style="left:240.15px;top:207.55px;" width="1.7" height="1.7" viewBox="0 0 1.7 1.7"><path d="M1.7,0 V1.7 H0 Z" fill="#a4a4a4"/></svg>
<svg class="a" style="left:213.4px;top:211.1px;" width="11" height="11" viewBox="0 0 11 11"><ellipse cx="3.8" cy="5.6" rx="3.3" ry="2.8" fill="#7d7d7d" stroke="#c2c2c2" stroke-width="0.8"/><path d="M4.2,8.8 L9.8,2.4 L10.6,3.2 L5.4,9.6 Z" fill="#d2d2d2"/></svg>
<svg class="a" style="left:224.05px;top:220.05px;" width="1.7" height="1.7" viewBox="0 0 1.7 1.7"><path d="M1.7,0 V1.7 H0 Z" fill="#a4a4a4"/></svg>
<svg class="a" style="left:229.5px;top:211.1px;" width="11" height="11" viewBox="0 0 11 11"><path d="M1,6.6 L6,1.4 L10,5 L5.6,9.8 L3.6,9.8 Z" fill="#d2d2d2"/><path d="M1.6,7 L4.6,9.6" stroke="#535353" stroke-width="0.7"/></svg>
<svg class="a" style="left:240.15px;top:220.05px;" width="1.7" height="1.7" viewBox="0 0 1.7 1.7"><path d="M1.7,0 V1.7 H0 Z" fill="#a4a4a4"/></svg>
<svg class="a" style="left:213.4px;top:223.6px;" width="11" height="11" viewBox="0 0 11 11"><path d="M3,2.6 A3.8,3.8 0 1 1 2.2,7.6" fill="none" stroke="#a8a8a8" stroke-width="0.8"/><path d="M1.2,0.8 L4.6,2 L2,4.2 Z" fill="#c4c4c4"/></svg>
<svg class="a" style="left:224.05px;top:232.55px;" width="1.7" height="1.7" viewBox="0 0 1.7 1.7"><path d="M1.7,0 V1.7 H0 Z" fill="#a4a4a4"/></svg>
<svg class="a" style="left:229.5px;top:223.6px;" width="11" height="11" viewBox="0 0 11 11"><rect x="0.8" y="4.4" width="5.4" height="5.4" fill="none" stroke="#d2d2d2" stroke-width="0.8"/><rect x="3.2" y="1" width="7" height="7" fill="none" stroke="#d2d2d2" stroke-width="0.8"/><path d="M6,5.2 L8.6,2.6 M6.8,2.4 H8.8 V4.4" fill="none" stroke="#d2d2d2" stroke-width="0.7"/></svg>
<svg class="a" style="left:240.15px;top:232.55px;" width="1.7" height="1.7" viewBox="0 0 1.7 1.7"><path d="M1.7,0 V1.7 H0 Z" fill="#a4a4a4"/></svg>
<svg class="a" style="left:213.4px;top:236.1px;" width="11" height="11" viewBox="0 0 11 11"><path d="M0.8,8.6 C3,8.8 3.6,4.4 5.4,5.4 C7,6.4 8,7.6 10.2,6.4" fill="none" stroke="#d2d2d2" stroke-width="1.1"/><path d="M2.4,1.6 L6,4.2 L3,5 Z M6.6,2.2 L9,1.4 L8.4,3.8Z" fill="#d2d2d2"/></svg>
<svg class="a" style="left:224.05px;top:245.05px;" width="1.7" height="1.7" viewBox="0 0 1.7 1.7"><path d="M1.7,0 V1.7 H0 Z" fill="#a4a4a4"/></svg>
<svg class="a" style="left:229.5px;top:236.1px;" width="11" height="11" viewBox="0 0 11 11"><rect x="2.6" y="2" width="7.2" height="7" fill="none" stroke="#d2d2d2" stroke-width="0.7" stroke-dasharray="1.2 0.8"/><path d="M0.6,0.6 L0.6,7.6 L5.6,4.4 Z" fill="#d2d2d2"/><rect x="8.8" y="1" width="1.8" height="1.8" fill="#d2d2d2"/><rect x="8.8" y="8" width="1.8" height="1.8" fill="#d2d2d2"/></svg>
<svg class="a" style="left:240.15px;top:245.05px;" width="1.7" height="1.7" viewBox="0 0 1.7 1.7"><path d="M1.7,0 V1.7 H0 Z" fill="#a4a4a4"/></svg>
<svg class="a" style="left:213.4px;top:248.6px;" width="11" height="11" viewBox="0 0 11 11"><ellipse cx="3.6" cy="4.6" rx="3" ry="2.8" fill="none" stroke="#d2d2d2" stroke-width="0.8"/><ellipse cx="6.2" cy="4.8" rx="3" ry="2.8" fill="none" stroke="#d2d2d2" stroke-width="0.8"/><path d="M5.6,5.6 L9.8,8.4 L7.6,8.6 L6.8,10.4 Z" fill="#d2d2d2"/></svg>
<svg class="a" style="left:224.05px;top:257.55px;" width="1.7" height="1.7" viewBox="0 0 1.7 1.7"><path d="M1.7,0 V1.7 H0 Z" fill="#a4a4a4"/></svg>
<svg class="a" style="left:229.5px;top:248.6px;" width="11" height="11" viewBox="0 0 11 11"><path d="M1,0.8 V9.6 H10.2 Z M1,3.6 L5,4.6 M1,6.6 L7.6,7.2 M3.6,3 V9.6 M6,5.4 V9.6" fill="none" stroke="#d2d2d2" stroke-width="0.8"/></svg>
<svg class="a" style="left:240.15px;top:257.55px;" width="1.7" height="1.7" viewBox="0 0 1.7 1.7"><path d="M1.7,0 V1.7 H0 Z" fill="#a4a4a4"/></svg>
<svg class="a" style="left:213.4px;top:261.1px;" width="11" height="11" viewBox="0 0 11 11"><rect x="1" y="1.4" width="8.6" height="8" fill="none" stroke="#d2d2d2" stroke-width="0.8"/><path d="M1,5.4 C3,4.4 7,6.4 9.6,5.4 M5.2,1.4 C4.4,3.6 6.2,7 5.2,9.4" fill="none" stroke="#d2d2d2" stroke-width="0.7"/><rect x="4.2" y="4.4" width="2" height="2" fill="#d2d2d2"/></svg>
<div class="a" style="left:230.4px;top:262.4px;width:9.2px;height:8.2px;border:0.7px solid #d0d0d0;background:linear-gradient(90deg,#2a2a2a,#e8e8e8)"></div>
<svg class="a" style="left:213.4px;top:273.6px;" width="11" height="11" viewBox="0 0 11 11"><path d="M1,10 L1.6,7.8 L6,3.4 L7.6,5 L3.2,9.4 Z" fill="none" stroke="#d2d2d2" stroke-width="0.8"/><path d="M6.2,2.2 L8,0.8 C9,0.2 10.6,1.8 10,2.8 L8.8,4.8 Z" fill="#d2d2d2"/></svg>
<svg class="a" style="left:224.05px;top:282.55px;" width="1.7" height="1.7" viewBox="0 0 1.7 1.7"><path d="M1.7,0 V1.7 H0 Z" fill="#a4a4a4"/></svg>
<svg class="a" style="left:229.5px;top:273.6px;" width="11" height="11" viewBox="0 0 11 11"><rect x="0.8" y="1" width="4" height="4" fill="#d2d2d2"/><circle cx="7" cy="6.6" r="3" fill="#8a8a8a" stroke="#d2d2d2" stroke-width="0.8"/><path d="M2.8,3 L7,6.6" stroke="#d2d2d2" stroke-width="0.7"/></svg>
<svg class="a" style="left:240.15px;top:282.55px;" width="1.7" height="1.7" viewBox="0 0 1.7 1.7"><path d="M1.7,0 V1.7 H0 Z" fill="#a4a4a4"/></svg>
<svg class="a" style="left:213.4px;top:286.1px;" width="11" height="11" viewBox="0 0 11 11"><rect x="3.6" y="3.6" width="5.6" height="6.4" rx="0.6" fill="none" stroke="#d2d2d2" stroke-width="0.8"/><rect x="5" y="1.4" width="2.6" height="2.2" fill="#d2d2d2"/><circle cx="6.4" cy="6.6" r="1.3" fill="#d2d2d2"/><path d="M0.6,1.2 H2.2 M0.6,3 H1.8 M1,1.2 V3.2" stroke="#d2d2d2" stroke-width="0.7"/></svg>
<svg class="a" style="left:224.05px;top:295.05px;" width="1.7" height="1.7" viewBox="0 0 1.7 1.7"><path d="M1.7,0 V1.7 H0 Z" fill="#a4a4a4"/></svg>
<svg class="a" style="left:229.5px;top:286.1px;" width="11" height="11" viewBox="0 0 11 11"><path d="M0.8,0.6 V10 H10.4" fill="none" stroke="#d2d2d2" stroke-width="0.7"/><rect x="2.4" y="4.6" width="1.8" height="5.4" fill="#d2d2d2"/><rect x="5.2" y="1.6" width="1.8" height="8.4" fill="#d2d2d2"/><rect x="8" y="3.6" width="1.8" height="6.4" fill="#d2d2d2"/></svg>
<svg class="a" style="left:240.15px;top:295.05px;" width="1.7" height="1.7" viewBox="0 0 1.7 1.7"><path d="M1.7,0 V1.7 H0 Z" fill="#a4a4a4"/></svg>
<svg class="a" style="left:213.4px;top:298.6px;" width="11" height="11" viewBox="0 0 11 11"><path d="M3,0.6 V9.6 M0.6,3 H9.6" stroke="#d2d2d2" stroke-width="0.8"/><path d="M3,3 H7 L9.6,5.6 V9.6 H3 Z" fill="none" stroke="#d2d2d2" stroke-width="0.8"/></svg>
<svg class="a" style="left:229.5px;top:298.6px;" width="11" height="11" viewBox="0 0 11 11"><path d="M1,10 L2,7.2 L6.8,2.4 L8.6,4.2 L3.8,9 Z" fill="none" stroke="#d2d2d2" stroke-width="0.8"/><path d="M7.2,1.8 L8.4,0.8 L10.2,2.6 L9.2,3.8 Z" fill="#d2d2d2"/></svg>
<svg class="a" style="left:240.15px;top:307.55px;" width="1.7" height="1.7" viewBox="0 0 1.7 1.7"><path d="M1.7,0 V1.7 H0 Z" fill="#a4a4a4"/></svg>
<svg class="a" style="left:213.4px;top:311.1px;" width="11" height="11" viewBox="0 0 11 11"><path transform="translate(11,0) scale(-1,1)" d="M2.4,6.2 V2.6 a0.6,0.6 0 0 1 1.2,0 V5.2 h0.3 V1.4 a0.6,0.6 0 0 1 1.2,0 V5 h0.3 V1.1 a0.6,0.6 0 0 1 1.2,0 V5.2 h0.3 V2.2 a0.6,0.6 0 0 1 1.2,0 V6 L9.4,4.6 a0.6,0.6 0 0 1 0.9,0.8 L8.4,8.4 C7.8,9.6 7,10.2 5.6,10.2 C3.8,10.2 2.4,9 2.4,6.2Z" fill="#d2d2d2"/></svg>
<svg class="a" style="left:224.05px;top:320.05px;" width="1.7" height="1.7" viewBox="0 0 1.7 1.7"><path d="M1.7,0 V1.7 H0 Z" fill="#a4a4a4"/></svg>
<svg class="a" style="left:229.5px;top:311.1px;" width="11" height="11" viewBox="0 0 11 11"><circle cx="4.4" cy="4.2" r="3.2" fill="none" stroke="#d2d2d2" stroke-width="0.9"/><path d="M6.8,6.6 L10,10" stroke="#d2d2d2" stroke-width="1.2" stroke-linecap="round"/></svg>
<svg class="a" style="left:220.65px;top:336.15px;" width="18.2" height="18.2" viewBox="0 0 18.2 18.2"><path d="M0,0 H18.2 V18.2 H0 Z M5.4,5.4 V12.8 H12.8 V5.4 Z" fill="#fff" fill-rule="evenodd"/><path d="M0.2,18 L18,0.2" stroke="#e8262a" stroke-width="1.1"/></svg>
<div class="a" style="left:211.3px;top:326.8px;width:18.2px;height:18.2px;background:#585858;border:0.7px solid #6e6e6e;"></div>
<span class="a t" style="left:218.35px;top:332.15px;line-height:9.1px;font-size:7px;font-weight:400;color:#dcdcdc;">?</span>
<svg class="a" style="left:234.4px;top:327.3px;" width="6" height="7" viewBox="0 0 6 7"><path d="M1,1.6 C3.4,0.6 5,2.4 4.4,5.6 M3,4.6 L4.4,6.2 L5.6,4.4" fill="none" stroke="#7c7c7c" stroke-width="0.8"/></svg>
<svg class="a" style="left:211.4px;top:348.6px;" width="6" height="6" viewBox="0 0 6 6"><rect x="1.8" y="1.8" width="3.8" height="3.8" fill="#fff" stroke="#000" stroke-width="0.6"/><rect x="0.4" y="0.4" width="3.6" height="3.6" fill="#111" stroke="#fff" stroke-width="0.6"/></svg>
<div class="a" style="left:212.9px;top:360.6px;width:6.6px;height:6.4px;background:#5b94d6;border:0.5px solid #dfe9f7;"></div>
<div class="a" style="left:223px;top:360.6px;width:6.6px;height:6.4px;border:0.5px solid #ddd;background:linear-gradient(90deg,#fff,#333)"></div>
<div class="a" style="left:232.4px;top:359.6px;width:8.6px;height:8.6px;background:#2e2e2e;"></div>
<svg class="a" style="left:233.2px;top:360.5px;" width="6.8" height="6.6" viewBox="0 0 6.8 6.6"><rect width="6.8" height="6.6" fill="#fff"/><path d="M0.2,6.4 L6.6,0.2" stroke="#e8262a" stroke-width="1"/></svg>
<div class="a" style="left:212px;top:372.4px;width:8.8px;height:8px;background:#2e2e2e;"></div>
<svg class="a" style="left:212.8px;top:373.4px;" width="7" height="6" viewBox="0 0 7 6"><rect x="0.5" y="0.5" width="4" height="3.4" rx="1" fill="#cfcfcf"/><rect x="2.6" y="2.2" width="4" height="3.4" rx="0.6" fill="#8a8a8a" stroke="#e0e0e0" stroke-width="0.5"/></svg>
<svg class="a" style="left:223.2px;top:373.4px;" width="7" height="6" viewBox="0 0 7 6"><rect x="0.5" y="0.5" width="4" height="3.4" rx="1" fill="#8a8a8a" stroke="#ccc" stroke-width="0.5"/><rect x="2.6" y="2.2" width="4" height="3.4" rx="0.6" fill="#bdbdbd"/></svg>
<svg class="a" style="left:233.9px;top:373.4px;" width="6" height="6" viewBox="0 0 6 6"><circle cx="3" cy="3" r="2.2" fill="none" stroke="#707070" stroke-width="0.7"/><circle cx="3" cy="3" r="0.8" fill="#707070"/></svg>
<svg class="a" style="left:220.5px;top:385.5px;" width="13" height="8.4" viewBox="0 0 13 8.4"><rect x="3.6" y="0.4" width="9" height="5.6" fill="#6a6a6a" stroke="#c4c4c4" stroke-width="0.8"/><rect x="0.4" y="2.6" width="7.4" height="5.2" fill="#535353" stroke="#c4c4c4" stroke-width="0.8"/></svg>
<svg class="a" style="left:222.3px;top:405.2px;" width="8" height="2" viewBox="0 0 8 2"><circle cx="1.2" cy="1" r="0.75" fill="#ddd"/><circle cx="4" cy="1" r="0.75" fill="#ddd"/><circle cx="6.8" cy="1" r="0.75" fill="#ddd"/></svg>
<svg class="a" style="left:392px;top:289px;" width="128" height="128" viewBox="0 0 128 128"><circle cx="64" cy="64" r="62.6" fill="#d43556" stroke="#5b8fe8" stroke-width="0.5"/></svg>
<svg class="a" style="left:474.9px;top:260.7px;" width="128" height="128" viewBox="0 0 128 128"><circle cx="64" cy="64" r="63" fill="#6796cd" stroke="#4f8df0" stroke-width="0.5"/></svg>
<svg class="a" style="left:392px;top:289px;" width="128" height="128" viewBox="0 0 128 128"><circle cx="64" cy="64" r="62.6" fill="none" stroke="#5b8fe8" stroke-width="0.45" opacity=".85"/></svg>
<div class="a" style="left:455px;top:352px;width:2px;height:2px;background:#4a8bf5;"></div>
<div class="a" style="left:455px;top:289.4px;width:2px;height:2px;background:#4a8bf5;"></div>
<div class="a" style="left:455px;top:414.6px;width:2px;height:2px;background:#4a8bf5;"></div>
<div class="a" style="left:392.4px;top:352px;width:2px;height:2px;background:#4a8bf5;"></div>
<div class="a" style="left:517.6px;top:352px;width:2px;height:2px;background:#4a8bf5;"></div>
<div class="a" style="left:537.9px;top:323.7px;width:2px;height:2px;background:#4a8bf5;"></div>
<div class="a" style="left:537.9px;top:260.7px;width:2px;height:2px;background:#4a8bf5;"></div>
<div class="a" style="left:537.9px;top:386.7px;width:2px;height:2px;background:#4a8bf5;"></div>
<div class="a" style="left:474.9px;top:323.7px;width:2px;height:2px;background:#4a8bf5;"></div>
<div class="a" style="left:600.9px;top:323.7px;width:2px;height:2px;background:#4a8bf5;"></div>
<svg class="a" style="left:832.8px;top:148.5px;" width="5.6" height="3.8" viewBox="0 0 5.6 3.8"><path d="M1,2.8 L2.8,1 L4.6,2.8" fill="none" stroke="#a8a8a8" stroke-width="0.8" stroke-linecap="round" stroke-linejoin="round"/></svg>
<svg class="a" style="left:832.8px;top:568.7px;" width="5.6" height="3.8" viewBox="0 0 5.6 3.8"><path d="M1,1 L2.8,2.8 L4.6,1" fill="none" stroke="#a8a8a8" stroke-width="0.8" stroke-linecap="round" stroke-linejoin="round"/></svg>
<div class="a" style="left:249px;top:575.9px;width:26.2px;height:7.8px;background:#444;"></div>
<span class="a t" style="left:250.4px;top:577.22px;line-height:6.76px;font-size:5.2px;font-weight:700;color:#f0f0f0;letter-spacing:0.158px;">43.05%</span>
<div class="a" style="left:275.6px;top:575.9px;width:7.6px;height:7.8px;background:#4d4d4d;"></div>
<svg class="a" style="left:276.6px;top:578.3px;" width="5.2" height="3.8" viewBox="0 0 5.2 3.8"><path d="M1,1 L2.6,2.8 L4.2,1" fill="none" stroke="#ccc" stroke-width="0.8" stroke-linecap="round" stroke-linejoin="round"/></svg>
<div class="a" style="left:287px;top:575.9px;width:26.2px;height:7.8px;background:#444;"></div>
<span class="a t" style="left:288.8px;top:577.22px;line-height:6.76px;font-size:5.2px;font-weight:700;color:#f0f0f0;letter-spacing:0.231px;">0°</span>
<div class="a" style="left:314px;top:575.9px;width:7.6px;height:7.8px;background:#4d4d4d;"></div>
<svg class="a" style="left:315px;top:578.3px;" width="5.2" height="3.8" viewBox="0 0 5.2 3.8"><path d="M1,1 L2.6,2.8 L4.2,1" fill="none" stroke="#ccc" stroke-width="0.8" stroke-linecap="round" stroke-linejoin="round"/></svg>
<svg class="a" style="left:326.3px;top:577.9px;" width="5" height="4.4" viewBox="0 0 5 4.4"><path d="M0.7,0.4 V4 M4.6,0.4 L1.6,2.2 L4.6,4 Z" stroke="#6e6e6e" stroke-width="0.7" fill="#6e6e6e"/></svg>
<svg class="a" style="left:336.8px;top:577.9px;" width="4" height="4.4" viewBox="0 0 4 4.4"><path d="M3.4,0.4 L0.6,2.2 L3.4,4 Z" fill="#6e6e6e"/></svg>
<div class="a" style="left:344.6px;top:575.9px;width:20.6px;height:7.8px;background:#444;"></div>
<span class="a t" style="left:346.6px;top:577.22px;line-height:6.76px;font-size:5.2px;font-weight:700;color:#f0f0f0;">1</span>
<div class="a" style="left:366px;top:575.9px;width:7.6px;height:7.8px;background:#4d4d4d;"></div>
<svg class="a" style="left:367px;top:578.3px;" width="5.2" height="3.8" viewBox="0 0 5.2 3.8"><path d="M1,1 L2.6,2.8 L4.2,1" fill="none" stroke="#ccc" stroke-width="0.8" stroke-linecap="round" stroke-linejoin="round"/></svg>
<svg class="a" style="left:379px;top:577.9px;" width="4" height="4.4" viewBox="0 0 4 4.4"><path d="M0.6,0.4 L3.4,2.2 L0.6,4 Z" fill="#6e6e6e"/></svg>
<svg class="a" style="left:387.7px;top:577.9px;" width="5" height="4.4" viewBox="0 0 5 4.4"><path d="M4.3,0.4 V4 M0.4,0.4 L3.4,2.2 L0.4,4 Z" stroke="#6e6e6e" stroke-width="0.7" fill="#6e6e6e"/></svg>
<span class="a t" style="left:420px;top:577.15px;line-height:6.89px;font-size:5.3px;font-weight:400;color:#e2e2e2;letter-spacing:0.210px;">Toggle Direct Selection</span>
<svg class="a" style="left:504.8px;top:577.8px;" width="4" height="4.6" viewBox="0 0 4 4.6"><path d="M0.6,0.3 L3.6,2.3 L0.6,4.3 Z" fill="#eee"/></svg>
<svg class="a" style="left:514.3px;top:577.9px;" width="3" height="4.4" viewBox="0 0 3 4.4"><path d="M2.2,0.6 L0.8,2.2 L2.2,3.8" fill="none" stroke="#8a8a8a" stroke-width="0.7"/></svg>
<svg class="a" style="left:825.3px;top:577.9px;" width="3" height="4.4" viewBox="0 0 3 4.4"><path d="M0.8,0.6 L2.2,2.2 L0.8,3.8" fill="none" stroke="#8a8a8a" stroke-width="0.7"/></svg>
<div class="a" style="left:666px;top:576.6px;width:10.4px;height:5.6px;background:#686868;border-radius:2.8px;"></div>
<div class="a" style="left:831px;top:574.9px;width:10px;height:9.1px;background:#535353;"></div>
<div class="a" style="left:848.2px;top:139.4px;width:6.4px;height:0;border-top:0.9px solid #3e3e3e"></div>
<svg class="a" style="left:846.4px;top:145.5px;" width="10" height="8.4" viewBox="0 0 10 8.4"><path d="M5,0.4 C8,0.4 9.8,2 9.6,4 C9.4,6 7.4,5.2 6.6,6 C5.8,6.8 6.8,8 5,8 C2.2,8 0.4,6.4 0.4,4.2 C0.4,2 2.4,0.4 5,0.4Z" fill="#d0d0d0"/><circle cx="3" cy="3" r="0.9" fill="#535353"/><circle cx="5.6" cy="2.2" r="0.9" fill="#535353"/><circle cx="2.6" cy="5.4" r="0.9" fill="#535353"/><circle cx="7.8" cy="3.6" r="0.9" fill="#535353"/></svg>
<svg class="a" style="left:846.8px;top:159.5px" width="9.4" height="8.8" viewBox="0 0 9.4 8.8"><defs><linearGradient id="cg" x1="0" y1="0.6" x2="1" y2="0.4"><stop offset="0" stop-color="#2e2e2e"/><stop offset="1" stop-color="#f0f0f0"/></linearGradient></defs><path d="M0.5,0.5 C5.5,0.5 9,3.6 9,8.4 H0.5 Z" fill="url(#cg)" stroke="#d0d0d0" stroke-width="0.7"/></svg>
<div class="a" style="left:841.4px;top:172.4px;width:20px;height:0.9px;background:#454545;"></div>
<div class="a" style="left:848.2px;top:175.6px;width:6.4px;height:0;border-top:0.9px solid #3e3e3e"></div>
<svg class="a" style="left:846.6px;top:182.2px;" width="9.6" height="7.2" viewBox="0 0 9.6 7.2"><rect x="0.3" y="0.3" width="9" height="6.6" fill="#888" stroke="#d0d0d0" stroke-width="0.6"/><path d="M0.3,2.5 H9.3 M0.3,4.7 H9.3 M3.3,0.3 V6.9 M6.3,0.3 V6.9" stroke="#d0d0d0" stroke-width="0.6"/><rect x="0.3" y="0.3" width="3" height="2.2" fill="#d0d0d0"/><rect x="6.3" y="2.5" width="3" height="2.2" fill="#d0d0d0"/></svg>
<svg class="a" style="left:846.9px;top:195px;" width="9" height="10" viewBox="0 0 9 10"><path d="M2.6,4.6 H6.4 L6,9.6 H3 Z" fill="#d0d0d0"/><path d="M4.5,0.2 L5.4,3 L4.5,4.4 L3.6,3 Z M1.2,1.4 L3.2,2.8 L3.4,4.6 L2,3.6 Z M7.8,1.4 L5.8,2.8 L5.6,4.6 L7,3.6Z" fill="#d0d0d0"/></svg>
<svg class="a" style="left:846.7px;top:210.2px;" width="9.4" height="9.6" viewBox="0 0 9.4 9.6"><circle cx="4.7" cy="2.5" r="2.3" fill="#d0d0d0"/><circle cx="2.5" cy="5.4" r="2.3" fill="#d0d0d0"/><circle cx="6.9" cy="5.4" r="2.3" fill="#d0d0d0"/><path d="M4.7,4.4 L5.6,8.6 H6.8 V9.4 H2.6 V8.6 H3.8 Z" fill="#d0d0d0"/></svg>
<div class="a" style="left:841.4px;top:222.8px;width:20px;height:0.9px;background:#454545;"></div>
<div class="a" style="left:848.2px;top:226.4px;width:6.4px;height:0;border-top:0.9px solid #3e3e3e"></div>
<svg class="a" style="left:846.7px;top:232.8px;" width="9.4" height="6.6" viewBox="0 0 9.4 6.6"><rect x="0" y="0.2" width="9.4" height="1.3" fill="#d0d0d0"/><rect x="0" y="2.7" width="9.4" height="1" fill="#d0d0d0"/><rect x="0" y="5" width="9.4" height="0.7" fill="#d0d0d0"/></svg>
<div class="a" style="left:846.9px;top:247.3px;width:9px;height:6.4px;border:0.6px solid #d0d0d0;background:linear-gradient(90deg,#2c2c2c,#e6e6e6)"></div>
<svg class="a" style="left:846.6px;top:261.5px;" width="9.6" height="9" viewBox="0 0 9.6 9"><circle cx="3.8" cy="3.6" r="3.1" fill="#d0d0d0"/><circle cx="5.8" cy="5.4" r="3.1" fill="#8e8e8e" stroke="#d0d0d0" stroke-width="0.6"/></svg>
<div class="a" style="left:841.4px;top:274px;width:20px;height:0.9px;background:#454545;"></div>
<div class="a" style="left:848.2px;top:277.4px;width:6.4px;height:0;border-top:0.9px solid #3e3e3e"></div>
<svg class="a" style="left:846.4px;top:282.2px;" width="10" height="10" viewBox="0 0 10 10"><circle cx="5" cy="5" r="2.7" fill="#d0d0d0"/><path d="M5,0.3 V1.6" stroke="#d0d0d0" stroke-width="0.8" transform="rotate(0 5 5)"/><path d="M5,0.3 V1.6" stroke="#d0d0d0" stroke-width="0.8" transform="rotate(30 5 5)"/><path d="M5,0.3 V1.6" stroke="#d0d0d0" stroke-width="0.8" transform="rotate(60 5 5)"/><path d="M5,0.3 V1.6" stroke="#d0d0d0" stroke-width="0.8" transform="rotate(90 5 5)"/><path d="M5,0.3 V1.6" stroke="#d0d0d0" stroke-width="0.8" transform="rotate(120 5 5)"/><path d="M5,0.3 V1.6" stroke="#d0d0d0" stroke-width="0.8" transform="rotate(150 5 5)"/><path d="M5,0.3 V1.6" stroke="#d0d0d0" stroke-width="0.8" transform="rotate(180 5 5)"/><path d="M5,0.3 V1.6" stroke="#d0d0d0" stroke-width="0.8" transform="rotate(210 5 5)"/><path d="M5,0.3 V1.6" stroke="#d0d0d0" stroke-width="0.8" transform="rotate(240 5 5)"/><path d="M5,0.3 V1.6" stroke="#d0d0d0" stroke-width="0.8" transform="rotate(270 5 5)"/><path d="M5,0.3 V1.6" stroke="#d0d0d0" stroke-width="0.8" transform="rotate(300 5 5)"/><path d="M5,0.3 V1.6" stroke="#d0d0d0" stroke-width="0.8" transform="rotate(330 5 5)"/></svg>
<svg class="a" style="left:846.6px;top:297.7px;" width="9.6" height="9" viewBox="0 0 9.6 9"><rect x="3" y="0.4" width="6.2" height="6" fill="none" stroke="#d0d0d0" stroke-width="0.7"/><rect x="0.4" y="3" width="5.6" height="5.6" fill="#666" stroke="#d0d0d0" stroke-width="0.7"/><circle cx="3.2" cy="5.8" r="1.5" fill="none" stroke="#d0d0d0" stroke-width="0.6"/></svg>
<div class="a" style="left:841.4px;top:310px;width:20px;height:0.9px;background:#454545;"></div>
<div class="a" style="left:848.2px;top:313.6px;width:6.4px;height:0;border-top:0.9px solid #3e3e3e"></div>
<svg class="a" style="left:846.4px;top:318px;" width="10" height="9.6" viewBox="0 0 10 9.6"><path d="M4.6,1.4 H0.6 V9 H8.4 V5.4" fill="none" stroke="#d0d0d0" stroke-width="0.9"/><path d="M4.4,5.4 L9,0.8 M6,0.6 H9.4 V4" fill="none" stroke="#d0d0d0" stroke-width="0.9"/></svg>
<svg class="a" style="left:846.6px;top:334.2px;" width="9.6" height="9.4" viewBox="0 0 9.6 9.4"><rect x="0.4" y="0.4" width="5.8" height="5.8" fill="none" stroke="#d0d0d0" stroke-width="0.7"/><rect x="3" y="3.2" width="6.2" height="5.8" fill="#535353" stroke="#d0d0d0" stroke-width="0.7"/></svg>
<div class="a" style="left:841.4px;top:346.8px;width:20px;height:0.9px;background:#454545;"></div>
<div class="a" style="left:848.2px;top:350.3px;width:6.4px;height:0;border-top:0.9px solid #3e3e3e"></div>
<svg class="a" style="left:846.4px;top:357px;" width="10" height="5" viewBox="0 0 10 5"><rect x="0.5" y="0.6" width="5.4" height="3.8" rx="1.9" fill="none" stroke="#d0d0d0" stroke-width="0.9"/><rect x="4.1" y="0.6" width="5.4" height="3.8" rx="1.9" fill="none" stroke="#d0d0d0" stroke-width="0.9"/></svg>
<div class="a" style="left:841.4px;top:368px;width:20px;height:0.9px;background:#454545;"></div>
<div class="a" style="left:899.7px;top:137.4px;width:32.8px;height:13.4px;background:#535353;"></div>
<span class="a t" style="left:866.6px;top:140.17px;line-height:8.06px;font-size:6.2px;font-weight:400;color:#cacaca;letter-spacing:-0.023px;">Properties</span>
<span class="a t" style="left:903.6px;top:140.17px;line-height:8.06px;font-size:6.2px;font-weight:700;color:#f6f6f6;letter-spacing:-0.193px;">Libraries</span>
<span class="a t" style="left:936.6px;top:140.17px;line-height:8.06px;font-size:6.2px;font-weight:400;color:#cacaca;letter-spacing:-0.236px;">Layers</span>
<svg class="a" style="left:984.7px;top:141.7px;" width="5.4" height="4.4" viewBox="0 0 5.4 4.4"><path d="M0,0.6 H5.4 M0,2.2 H5.4 M0,3.8 H5.4" stroke="#bdbdbd" stroke-width="0.7"/></svg>
<svg class="a" style="left:868.1px;top:159.7px;" width="3.4" height="5" viewBox="0 0 3.4 5"><path d="M2.6,0.6 L0.8,2.5 L2.6,4.4" fill="none" stroke="#e8e8e8" stroke-width="1.2" stroke-linecap="round" stroke-linejoin="round"/></svg>
<span class="a t" style="left:875px;top:159.51px;line-height:6.37px;font-size:4.9px;font-weight:700;color:#d2d2d2;letter-spacing:0.319px;">PLAYBOOK</span>
<svg class="a" style="left:975.6px;top:157.2px;" width="10" height="10" viewBox="0 0 10 10"><circle cx="4.6" cy="4.8" r="4" fill="#e6e6e6"/><circle cx="4.6" cy="3.8" r="1.5" fill="#535353"/><path d="M1.8,7.6 C2,5.8 7.2,5.8 7.4,7.6 C6,8.8 3.2,8.8 1.8,7.6Z" fill="#535353"/><path d="M8.4,6.6 V9.2 M7.1,7.9 H9.7" stroke="#e6e6e6" stroke-width="0.8"/></svg>
<svg class="a" style="left:868.8px;top:178.4px;" width="6" height="6" viewBox="0 0 6 6"><circle cx="2.4" cy="2.4" r="1.8" fill="none" stroke="#dcdcdc" stroke-width="0.8"/><path d="M3.7,3.7 L5.4,5.4" stroke="#dcdcdc" stroke-width="0.9" stroke-linecap="round"/></svg>
<span class="a t" style="left:879px;top:178.39px;line-height:7.02px;font-size:5.4px;font-weight:400;color:#787878;letter-spacing:0.165px;font-style:italic;">Search current library</span>
<svg class="a" style="left:977.8px;top:179.8px;" width="5.6" height="4" viewBox="0 0 5.6 4"><path d="M1,1 L2.8,3 L4.6,1" fill="none" stroke="#eee" stroke-width="1" stroke-linecap="round" stroke-linejoin="round"/></svg>
<div class="a" style="left:868.7px;top:189.2px;width:118px;height:0.6px;background:#626262;"></div>
<svg class="a" style="left:871.8px;top:196.5px;" width="6.4" height="6.6" viewBox="0 0 6.4 6.6"><path d="M0.2,0.4 H6.2 L3.9,3.2 V6.4 L2.5,5.4 V3.2 Z" fill="#e0e0e0"/></svg>
<svg class="a" style="left:884.9px;top:196.8px;" width="7.4" height="7" viewBox="0 0 7.4 7"><path d="M0.2,1.2 H4.4 M0.2,3.2 H3.4 M0.2,5.2 H2.4" stroke="#e0e0e0" stroke-width="0.8"/><path d="M6,0.4 V6.6" stroke="#e0e0e0" stroke-width="0.8"/></svg>
<svg class="a" style="left:963px;top:196.7px;" width="7.6" height="6.6" viewBox="0 0 7.6 6.6"><path d="M0.2,0.8 H2 M3,0.8 H7.4 M1.8,3.3 H3 M4,3.3 H7.4 M1.8,5.8 H3 M4,5.8 H7.4" stroke="#d8d8d8" stroke-width="0.9"/><path d="M0.2,0.8 V2" stroke="#d8d8d8" stroke-width="0.6"/></svg>
<svg class="a" style="left:976.4px;top:196.7px;" width="7.6" height="6.6" viewBox="0 0 7.6 6.6"><rect x="0.1" y="0.1" width="1.7" height="1.5" fill="#e0e0e0"/><rect x="0.1" y="2.55" width="1.7" height="1.5" fill="#e0e0e0"/><rect x="0.1" y="5" width="1.7" height="1.5" fill="#e0e0e0"/><path d="M2.8,0.85 H7.5 M2.8,3.3 H7.5 M2.8,5.75 H7.5" stroke="#e0e0e0" stroke-width="1"/></svg>
<svg class="a" style="left:868px;top:220.1px;" width="5.2" height="3.8" viewBox="0 0 5.2 3.8"><path d="M1,1 L2.6,2.8 L4.2,1" fill="none" stroke="#d8d8d8" stroke-width="0.8" stroke-linecap="round" stroke-linejoin="round"/></svg>
<span class="a t" style="left:875.8px;top:217.94px;line-height:8.32px;font-size:6.4px;font-weight:400;color:#d8d8d8;letter-spacing:-0.169px;">Colours / <b style="color:#f0f0f0">Secondary</b></span>
<svg class="a" style="left:868px;top:290.3px;" width="5.2" height="3.8" viewBox="0 0 5.2 3.8"><path d="M1,1 L2.6,2.8 L4.2,1" fill="none" stroke="#d8d8d8" stroke-width="0.8" stroke-linecap="round" stroke-linejoin="round"/></svg>
<span class="a t" style="left:875.8px;top:288.14px;line-height:8.32px;font-size:6.4px;font-weight:400;color:#d8d8d8;letter-spacing:-0.186px;">Colours / <b style="color:#f0f0f0">Primary</b></span>
<div class="a" style="left:868.4px;top:229.8px;width:25.7px;height:25.6px;background:#00e0e0;border-radius:1.6px;"></div>
<div class="a" style="left:896.2px;top:229.8px;width:25.7px;height:25.6px;background:#3b9fff;border-radius:1.6px;"></div>
<div class="a" style="left:924px;top:229.8px;width:25.7px;height:25.6px;background:#6be96b;border-radius:1.6px;"></div>
<div class="a" style="left:951.8px;top:229.8px;width:25.7px;height:25.6px;background:#b499fb;border-radius:1.6px;"></div>
<div class="a" style="left:868.4px;top:257.6px;width:25.7px;height:25.6px;background:#e6f40a;border-radius:1.6px;"></div>
<div class="a" style="left:896.2px;top:257.6px;width:25.7px;height:25.6px;background:#ffb43a;border-radius:1.6px;"></div>
<div class="a" style="left:868.4px;top:300.1px;width:25.7px;height:25.6px;background:#000;border-radius:1.6px;"></div>
<div class="a" style="left:896.2px;top:300.1px;width:25.7px;height:25.6px;background:#737e99;border-radius:1.6px;"></div>
<div class="a" style="left:924px;top:300.1px;width:25.7px;height:25.6px;background:#3a4668;border-radius:1.6px;"></div>
<div class="a" style="left:951.8px;top:300.1px;width:25.7px;height:25.6px;background:#b3b9cf;border-radius:1.6px;"></div>
<div class="a" style="left:868.4px;top:327.9px;width:25.7px;height:25.6px;background:#c0c7d3;border-radius:1.6px;"></div>
<div class="a" style="left:896.2px;top:327.9px;width:25.7px;height:25.6px;background:#f5ebe6;border-radius:1.6px;"></div>
<div class="a" style="left:924px;top:327.9px;width:25.7px;height:25.6px;background:#f6f2ef;border-radius:1.6px;"></div>
<div class="a" style="left:951.8px;top:327.9px;width:25.7px;height:25.6px;background:#ff0050;border-radius:1.6px;"></div>
<div class="a" style="left:868.4px;top:355.7px;width:25.7px;height:25.6px;background:#fff;border-radius:1.6px;"></div>
<svg class="a" style="left:870.8px;top:575.05px;" width="8.4" height="5.1" viewBox="0 0 7.6 4.6"><path d="M1.6,4.4 C0,4.4 0,2.4 1.5,2.3 C1.6,0.2 4.6,-0.2 5.2,1.6 C7.4,1.4 7.6,4.4 5.8,4.4 Z" fill="#e4e4e4"/></svg>
<svg class="a" style="left:953.1px;top:574.2px;" width="7.8" height="6.4" viewBox="0 0 7 5.8"><path d="M0.2,0.2 H2.8 L3.4,1.2 H6.8 V5.6 H0.2 Z" fill="#dcdcdc"/></svg>
<svg class="a" style="left:965.1px;top:574.4px;" width="7" height="6.4" viewBox="0 0 7 6.4"><path d="M3,0.4 V5.6 M0.4,3 H5.6" stroke="#ececec" stroke-width="1.1"/><circle cx="6.4" cy="5.6" r="0.5" fill="#ececec"/></svg>
<svg class="a" style="left:978.3px;top:574.5px;" width="5" height="6" viewBox="0 0 5 6"><path d="M0.4,1.2 H4.6 M1.6,1.2 V0.4 H3.4 V1.2 M0.9,1.2 L1.2,5.6 H3.8 L4.1,1.2" fill="none" stroke="#7a7a7a" stroke-width="0.7"/></svg>
</div></div>
<svg id="over" width="1201" height="699" viewBox="0 0 1201 699"><path d="M242.1,140.5 C240.2,139.9 234.5,137.9 230.8,137.0 C227.1,136.1 223.6,135.6 220.1,135.4 C216.5,135.2 212.7,135.1 209.3,135.9 C205.9,136.7 202.4,138.2 199.7,140.2 C196.9,142.3 194.1,145.3 192.7,148.3 C191.3,151.2 190.6,154.9 191.1,157.9 C191.5,161.0 193.2,164.0 195.4,166.5 C197.5,169.0 200.6,171.2 204.0,172.9 C207.4,174.6 211.8,176.2 215.8,176.7 C219.7,177.2 224.2,177.3 227.6,176.2 C231.0,175.0 234.2,172.6 236.2,169.7 C238.1,166.9 239.1,162.6 239.4,159.0 C239.6,155.4 239.0,151.6 237.8,148.3 C236.5,145.0 234.5,141.7 231.9,139.1 C229.3,136.5 225.6,134.1 222.2,132.7 C218.8,131.3 215.1,130.6 211.5,130.6 C207.9,130.6 204.1,131.2 200.8,132.7 C197.4,134.2 193.6,136.9 191.1,139.7 C188.6,142.4 186.5,145.9 185.7,149.3 C184.9,152.7 185.0,156.8 186.3,160.1 C187.5,163.3 189.9,166.1 193.2,168.6 C196.5,171.2 201.5,173.3 206.1,175.1 C210.8,176.9 216.5,178.4 221.1,179.4 C225.8,180.3 230.3,181.2 234.0,180.7 C237.7,180.1 241.0,178.7 243.1,176.2 C245.3,173.6 246.5,169.2 246.9,165.4 C247.2,161.7 246.5,157.4 245.3,153.6 C244.0,149.9 242.0,146.3 239.4,142.9 C236.8,139.5 233.3,135.8 229.7,133.2 C226.1,130.6 221.7,128.4 217.9,127.3 C214.2,126.3 210.8,126.2 207.2,126.8 C203.6,127.4 199.5,129.0 196.5,131.1 C193.4,133.2 190.2,137.8 188.9,139.1" fill="none" stroke="#f0214f" stroke-width="2.8" stroke-linecap="round" stroke-linejoin="round"/></svg>
</body></html>
